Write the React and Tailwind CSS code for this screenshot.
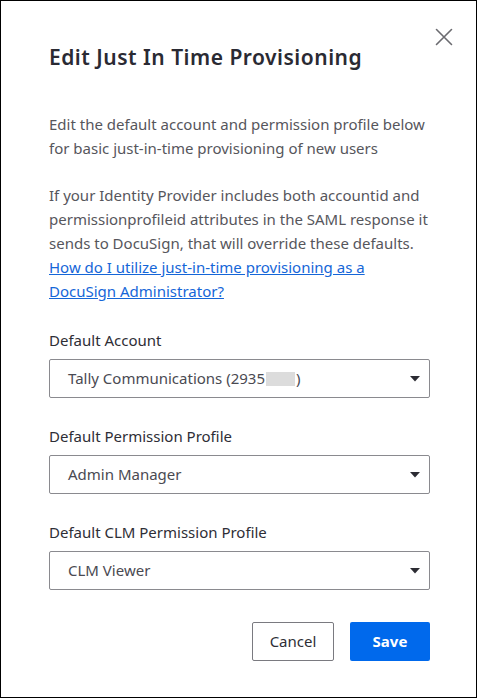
import React from 'react';

const font = { fontFamily: '"Noto Sans", "Liberation Sans", sans-serif' };

const Caret = () => (
  <svg width="10" height="6" viewBox="0 0 10 6" className="shrink-0">
    <path d="M0 0 L10 0 L5 5.5 Z" fill="#2c2c33" />
  </svg>
);

const SelectBox = ({ children }) => (
  <div className="flex h-[39px] w-full items-center justify-between rounded-[2px] border border-[#8a8a8f] pl-[18px] pr-[9px] text-[15px] text-[#4a4a52]">
    <div className="flex items-center">{children}</div>
    <Caret />
  </div>
);

const Field = ({ label, children, className = '' }) => (
  <div className={className}>
    <div className="mb-[9px] text-[15px] leading-[20px] text-[#2e2e36]">{label}</div>
    <SelectBox>{children}</SelectBox>
  </div>
);

export default function App() {
  return (
    <div style={font} className="relative h-[698px] w-[477px] border border-black bg-white pl-[48px] pr-[46px] pt-[42px]">
      {/* close */}
      <button className="absolute right-[23px] top-[27px] p-0">
        <svg width="18" height="18" viewBox="0 0 18 18">
          <path d="M1.5 1.5 L16.5 16.5 M16.5 1.5 L1.5 16.5" stroke="#6b6b70" strokeWidth="1.6" strokeLinecap="round" />
        </svg>
      </button>

      <h1 className="text-[21px] font-semibold leading-[28px] tracking-[0.5px] text-[#2a2a33]">Edit Just In Time Provisioning</h1>

      <p className="mt-[41px] text-[15px] leading-[24px] text-[#56565c]">
        Edit the default account and permission profile below for basic just-in-time provisioning of new users
      </p>

      <p className="mt-[23px] text-[15px] leading-[24px] text-[#56565c]">
        If your Identity Provider includes both accountid and permissionprofileid attributes in the SAML response it sends to DocuSign, that will override these defaults.{' '}
        <a href="#" className="text-[#1566d8] underline">How do I utilize just-in-time provisioning as a DocuSign Administrator?</a>
      </p>

      <Field label="Default Account" className="mt-[27px]">
        <span>Tally Communications (2935</span>
        <span className="mx-[1px] inline-block h-[14px] w-[29px] bg-[#dcdcdc]" />
        <span>)</span>
      </Field>

      <Field label="Default Permission Profile" className="mt-[28px]">
        <span>Admin Manager</span>
      </Field>

      <Field label="Default CLM Permission Profile" className="mt-[28px]">
        <span>CLM Viewer</span>
      </Field>

      <div className="mt-[32px] flex justify-end gap-[16px]">
        <button className="h-[39px] w-[82px] rounded-[2px] border border-[#7a7a80] bg-white text-[15px] text-[#2e2e36]">Cancel</button>
        <button className="h-[39px] w-[80px] rounded-[2px] bg-[#0069ec] text-[15px] font-bold text-white">Save</button>
      </div>
    </div>
  );
}
